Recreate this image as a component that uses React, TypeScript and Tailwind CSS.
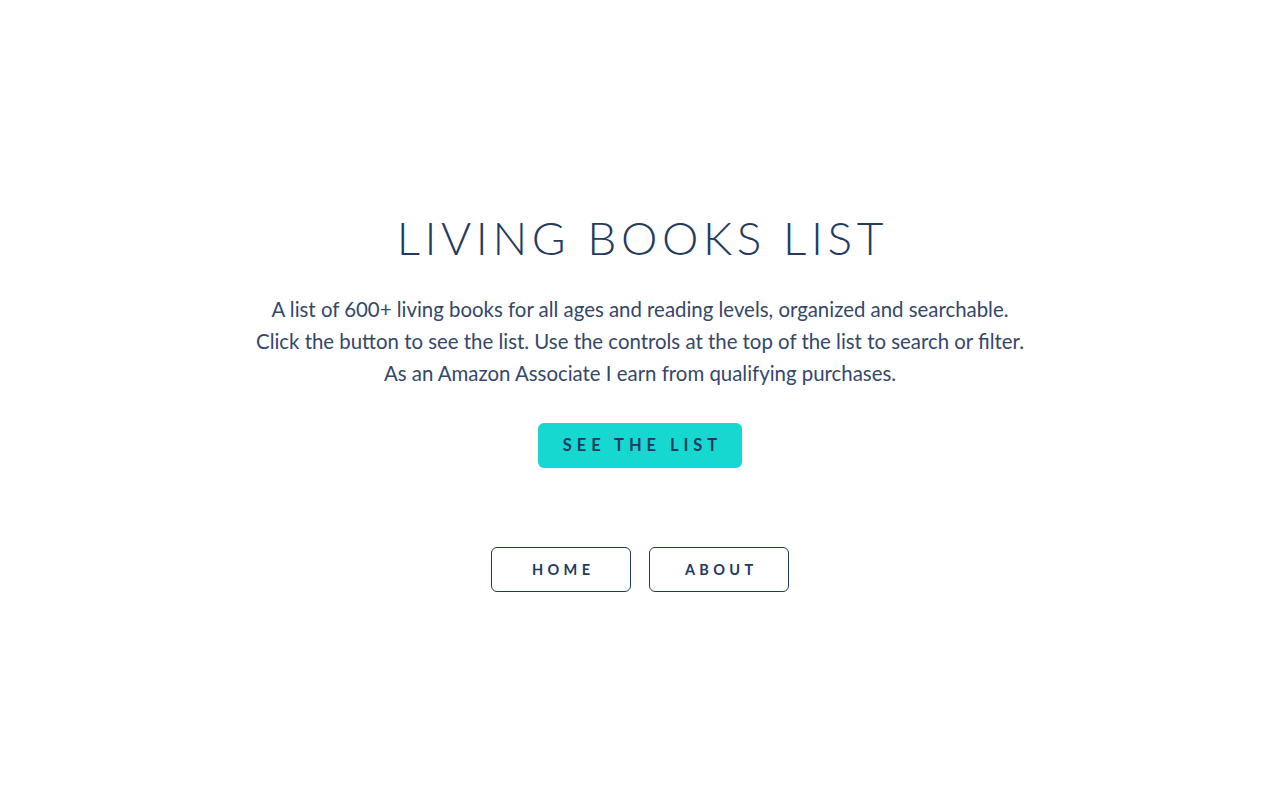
import React from 'react';

const font = { fontFamily: '"Lato", "Open Sans", sans-serif' };

export default function App() {
  return (
    <div className="min-h-[800px] w-full bg-white flex flex-col items-center text-[#243b5e]" style={font}>
      <h1 className="mt-[213px] text-[46px] leading-[50px] font-light tracking-[0.1em] pl-[0.1em]">
        LIVING BOOKS LIST
      </h1>
      <div className="mt-[30px] text-center text-[20.4px] leading-[32px] text-[#34476a]">
        <p>A list of 600+ living books for all ages and reading levels, organized and searchable.</p>
        <p>Click the button to see the list. Use the controls at the top of the list to search or filter.</p>
        <p>As an Amazon Associate I earn from qualifying purchases.</p>
      </div>
      <button className="mt-[34px] w-[204px] h-[45px] rounded-[6px] bg-[#17d8d1] text-[#1f3a5f] text-[16.5px] font-bold tracking-[0.3em] pl-[0.3em]">
        SEE THE LIST
      </button>
      <div className="mt-[79px] flex gap-[18px]">
        <button className="w-[140px] h-[45px] rounded-[6px] border border-[#1f3a5f] text-[#1f3a5f] text-[14.5px] font-bold tracking-[0.3em] pl-[0.3em]">
          HOME
        </button>
        <button className="w-[140px] h-[45px] rounded-[6px] border border-[#1f3a5f] text-[#1f3a5f] text-[14.5px] font-bold tracking-[0.3em] pl-[0.3em]">
          ABOUT
        </button>
      </div>
    </div>
  );
}
